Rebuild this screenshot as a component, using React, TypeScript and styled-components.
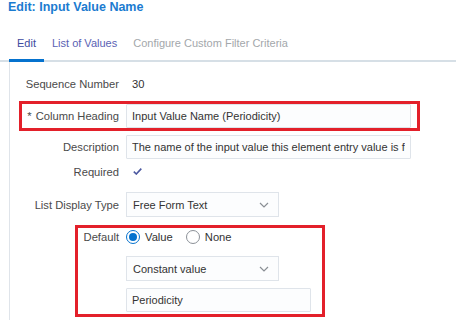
import styled, { createGlobalStyle } from "styled-components";

const GlobalStyle = createGlobalStyle`
  body {
    margin: 0;
    background: #ffffff;
    font-family: "Liberation Sans", Arial, sans-serif;
    color: #333333;
  }
`;

const Page = styled.div`
  width: 456px;
  height: 320px;
  overflow: hidden;
  font-size: 11.2px;
`;

const Title = styled.h1`
  margin: 0;
  padding: 0 8px;
  font-size: 12.5px;
  line-height: 15px;
  font-weight: bold;
  color: #1b7bd0;
`;

const TabBar = styled.div`
  display: flex;
  margin-top: 13px;
  padding-left: 9px;
  border-bottom: 2px solid #d6dfe6;
  font-size: 11px;
`;

const Tab = styled.div<{ $state: "active" | "link" | "disabled" }>`
  padding: 8px 8px 8px;
  line-height: 15px;
  margin-bottom: -2px;
  border-bottom: 3px solid
    ${(p) => (p.$state === "active" ? "#0572ce" : "transparent")};
  color: ${(p) =>
    p.$state === "active"
      ? "#3d4aa0"
      : p.$state === "link"
        ? "#5a5fb4"
        : "#a3a7ab"};
  white-space: nowrap;
`;

const Panel = styled.div`
  margin-left: 9px;
  border-left: 1px solid #dfe4ea;
  padding-top: 9px;
  height: 260px;
`;

const Row = styled.div<{ $h: number; $mt?: number }>`
  display: flex;
  align-items: center;
  height: ${(p) => p.$h}px;
  margin-top: ${(p) => p.$mt ?? 0}px;
`;

const Highlight = styled.div<{ $left: number; $width: number; $mt: number }>`
  margin-left: ${(p) => p.$left}px;
  margin-top: ${(p) => p.$mt}px;
  width: ${(p) => p.$width}px;
  box-sizing: border-box;
  border: 3px solid #e3202a;
`;

const Label = styled.div<{ $w?: number }>`
  width: ${(p) => p.$w ?? 109}px;
  margin-right: 7px;
  text-align: right;
  color: #4a4a4a;
  white-space: nowrap;
  flex-shrink: 0;
`;

const Star = styled.span`
  color: #4a4a4a;
  margin-right: 4px;
`;

const Value = styled.div`
  padding-left: 6px;
  color: #333333;
`;

const TextField = styled.input<{ $w: number; $h?: number }>`
  box-sizing: border-box;
  width: ${(p) => p.$w}px;
  height: ${(p) => p.$h ?? 24}px;
  padding: 0 5px;
  border: 1px solid #dfe4ea;
  border-radius: 1px;
  background: #fcfdfe;
  font-family: inherit;
  font-size: 11px;
  color: #333333;
  outline: none;
`;

const Select = styled.div<{ $w: number }>`
  box-sizing: border-box;
  width: ${(p) => p.$w}px;
  height: 25px;
  padding: 0 9px 0 6px;
  border: 1px solid #dfe4ea;
  background: #fcfdfe;
  display: flex;
  align-items: center;
  justify-content: space-between;
  font-size: 11px;
  color: #333333;
`;

const RadioGroup = styled.div`
  display: flex;
  align-items: center;
`;

const RadioOption = styled.label<{ $last?: boolean }>`
  display: flex;
  align-items: center;
  gap: 5px;
  margin-right: ${(p) => (p.$last ? 0 : 13)}px;
  color: #333333;
`;

const RadioCircle = styled.span<{ $on?: boolean }>`
  box-sizing: border-box;
  width: 14px;
  height: 14px;
  border-radius: 50%;
  border: 1px solid ${(p) => (p.$on ? "#0572ce" : "#8c9198")};
  background: #ffffff;
  display: flex;
  align-items: center;
  justify-content: center;

  &::after {
    content: "";
    display: ${(p) => (p.$on ? "block" : "none")};
    width: 8px;
    height: 8px;
    border-radius: 50%;
    background: #0572ce;
  }
`;

const Check = styled.svg`
  margin-left: 7px;
  margin-top: -2px;
`;

const DefaultStack = styled.div`
  display: flex;
  flex-direction: column;
  padding-bottom: 2px;
`;

const StackRow = styled.div<{ $mt: number }>`
  display: flex;
  margin-top: ${(p) => p.$mt}px;
  padding-left: 48px;
`;

function Chevron() {
  return (
    <svg width="10" height="6" viewBox="0 0 10 6">
      <path d="M1 1 L5 5 L9 1" fill="none" stroke="#8a8f95" strokeWidth="1.2" />
    </svg>
  );
}

export default function App() {
  return (
    <Page>
      <GlobalStyle />
      <Title>Edit: Input Value Name</Title>
      <TabBar>
        <Tab $state="active">Edit</Tab>
        <Tab $state="link">List of Values</Tab>
        <Tab $state="disabled">Configure Custom Filter Criteria</Tab>
      </TabBar>
      <Panel>
        <Row $h={25}>
          <Label>Sequence Number</Label>
          <Value>30</Value>
        </Row>

        <Highlight $left={9} $width={401} $mt={5}>
          <Row $h={24}>
            <Label $w={97}>
              <Star>*</Star>Column Heading
            </Label>
            <TextField $w={285} readOnly value="Input Value Name (Periodicity)" />
          </Row>
        </Highlight>

        <Row $h={24} $mt={4}>
          <Label>Description</Label>
          <TextField
            $w={285}
            readOnly
            value="The name of the input value this element entry value is for"
          />
        </Row>

        <Row $h={24} $mt={1}>
          <Label>Required</Label>
          <Check width="9" height="7" viewBox="0 0 9 7">
            <path
              d="M0.8 3.6 L3.3 6 L8.3 0.6"
              fill="none"
              stroke="#4b58a0"
              strokeWidth="1.6"
            />
          </Check>
        </Row>

        <Row $h={25} $mt={8}>
          <Label>List Display Type</Label>
          <Select $w={153}>
            Free Form Text
            <Chevron />
          </Select>
        </Row>

        <Highlight $left={65} $width={250} $mt={8}>
          <DefaultStack>
            <Row $h={18}>
              <Label $w={41}>Default</Label>
              <RadioGroup>
                <RadioOption>
                  <RadioCircle $on />
                  Value
                </RadioOption>
                <RadioOption $last>
                  <RadioCircle />
                  None
                </RadioOption>
              </RadioGroup>
            </Row>
            <StackRow $mt={10}>
              <Select $w={153}>
                Constant value
                <Chevron />
              </Select>
            </StackRow>
            <StackRow $mt={7}>
              <TextField $w={185} readOnly value="Periodicity" />
            </StackRow>
          </DefaultStack>
        </Highlight>
      </Panel>
    </Page>
  );
}
